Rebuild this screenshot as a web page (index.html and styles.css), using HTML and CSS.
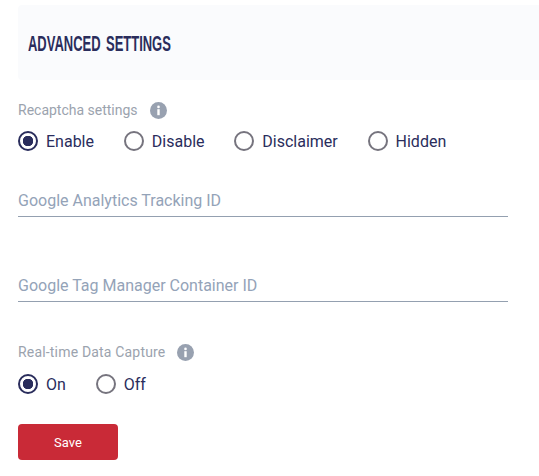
FILE: index.html
```html
<!DOCTYPE html>
<html lang="en">
<head>
    <meta charset="UTF-8">
    <title>Advanced Settings</title>
    <link rel="stylesheet" href="styles.css">
</head>
<body>
    <div class="panel-head">
        <h2>ADVANCED SETTINGS</h2>
    </div>
    <form class="settings">
        <div class="field-label field-label-first">
            <span>Recaptcha settings</span>
            <svg class="info" viewBox="0 0 17 17"><circle cx="8.5" cy="8.5" r="8.5" fill="#98a1b0"/><circle cx="8.5" cy="4.9" r="1.3" fill="#fff"/><rect x="7.3" y="7.2" width="2.4" height="6" fill="#fff"/></svg>
        </div>
        <div class="radio-group">
            <label class="radio"><input type="radio" name="recaptcha" checked><span class="dot"></span>Enable</label>
            <label class="radio"><input type="radio" name="recaptcha"><span class="dot"></span>Disable</label>
            <label class="radio"><input type="radio" name="recaptcha"><span class="dot"></span>Disclaimer</label>
            <label class="radio"><input type="radio" name="recaptcha"><span class="dot"></span>Hidden</label>
        </div>
        <input class="text-input text-input-first" type="text" placeholder="Google Analytics Tracking ID">
        <input class="text-input text-input-second" type="text" placeholder="Google Tag Manager Container ID">
        <div class="field-label field-label-capture">
            <span>Real-time Data Capture</span>
            <svg class="info" viewBox="0 0 17 17"><circle cx="8.5" cy="8.5" r="8.5" fill="#98a1b0"/><circle cx="8.5" cy="4.9" r="1.3" fill="#fff"/><rect x="7.3" y="7.2" width="2.4" height="6" fill="#fff"/></svg>
        </div>
        <div class="radio-group radio-group-capture">
            <label class="radio"><input type="radio" name="capture" checked><span class="dot"></span>On</label>
            <label class="radio"><input type="radio" name="capture"><span class="dot"></span>Off</label>
        </div>
        <button class="save-button" type="button">Save</button>
    </form>
</body>
</html>
```

FILE: styles.css
```css
body {
    margin: 0;
    background: #fff;
    font-family: 'Roboto', sans-serif;
    overflow: hidden;
}
.panel-head {
    display: flex;
    align-items: center;
    box-sizing: border-box;
    height: 75px;
    margin: 5px 0 0 18px;
    padding: 3px 0 0 10px;
    background: #fafbfd;
    border-radius: 4px 0 0 4px;
}
/* no condensed font here, so squeeze the bold sans */
.panel-head h2 {
    margin: 0;
    font-family: 'Liberation Sans', sans-serif;
    font-size: 22px;
    font-weight: 700;
    word-spacing: 3px;
    color: #2a2d5c;
    white-space: nowrap;
    transform: scaleX(0.59);
    transform-origin: left center;
}
.settings {
    display: flex;
    flex-direction: column;
    align-items: flex-start;
    padding-left: 18px;
}
.field-label {
    display: flex;
    align-items: center;
    gap: 12px;
    height: 20px;
    font-size: 14px;
    color: #9ba3ae;
}
.field-label-first {
    margin-top: 20px;
}
.field-label-capture {
    margin-top: 40px;
    letter-spacing: 0.18px;
}
.info {
    width: 17px;
    height: 17px;
}
.radio-group {
    display: flex;
    gap: 29.8px;
    margin-top: 11px;
}
.radio-group-capture {
    margin-top: 12px;
}
.radio {
    display: flex;
    align-items: center;
    gap: 8px;
    height: 20px;
    font-size: 16px;
    color: #2a2d5c;
}
.radio input {
    display: none;
}
.dot {
    box-sizing: border-box;
    width: 20px;
    height: 20px;
    border: 2px solid #76747e;
    border-radius: 50%;
}
.radio input:checked + .dot {
    border-color: #2a2d5c;
    background: radial-gradient(circle, #2a2d5c 0 5px, transparent 5.5px);
}
.text-input {
    box-sizing: border-box;
    display: block;
    width: 490px;
    height: 31px;
    padding: 0 0 2px;
    border: none;
    border-bottom: 1px solid #94a0b0;
    outline: none;
    font-family: 'Roboto', sans-serif;
    font-size: 16px;
}
.text-input::placeholder {
    color: #94a3b8;
    opacity: 1;
}
.text-input-first {
    margin-top: 35px;
}
.text-input-second {
    margin-top: 54px;
}
.save-button {
    width: 100px;
    height: 36px;
    margin-top: 30px;
    border: none;
    border-radius: 4px;
    background: #c92a37;
    color: #fff;
    font-family: 'Roboto', sans-serif;
    font-size: 13px;
    font-weight: 400;
}
```
